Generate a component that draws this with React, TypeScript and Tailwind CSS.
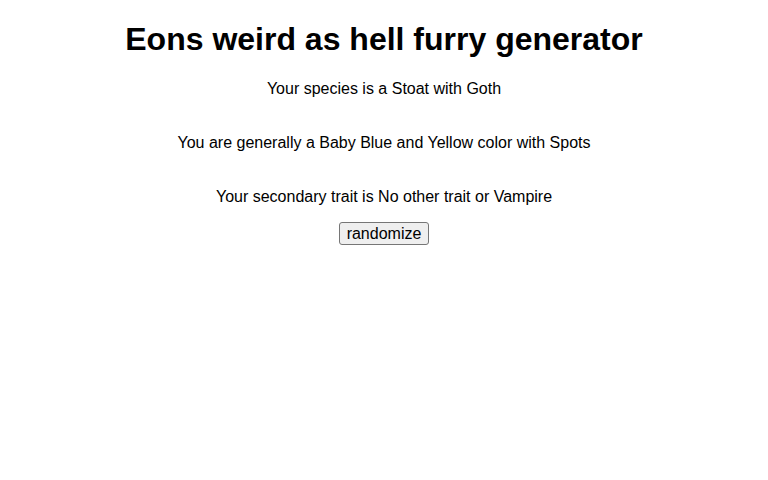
export default function App() {
  return (
    <div className="min-h-[480px] w-full bg-white text-black flex flex-col items-center text-center font-['Liberation_Sans',Arial,sans-serif]">
      <h1 className="mt-[21.44px] text-[32px] leading-[37px] font-bold">Eons weird as hell furry generator</h1>
      <p className="mt-[21.44px] text-[16px] leading-[18.4px]">Your species is a Stoat with Goth</p>
      <p className="mt-[35.6px] text-[16px] leading-[18.4px]">You are generally a Baby Blue and Yellow color with Spots</p>
      <p className="mt-[35.6px] text-[16px] leading-[18.4px]">Your secondary trait is No other trait or Vampire</p>
      <button className="mt-[16px] h-[23px] px-[7px] text-[16px] leading-[18.4px] bg-[#efefef] border border-[#767676] rounded-[3px] text-black">randomize</button>
    </div>
  );
}
